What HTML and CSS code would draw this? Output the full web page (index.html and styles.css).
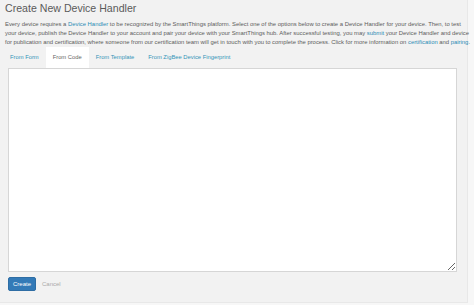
FILE: index.html
```html
<!DOCTYPE html>
<html lang="en">
  <head>
    <meta charset="UTF-8" />
    <title>Create New Device Handler</title>
    <link rel="stylesheet" href="styles.css">
  </head>
  <body>
    <div class="page">
      <h1>Create New Device Handler</h1>
      <p class="intro">
        Every device requires a <a href="#">Device Handler</a> to be recognized by the SmartThings platform. Select one of the options below to create a Device Handler for your device. Then, to test<br>
        your device, publish the Device Handler to your account and pair your device with your SmartThings hub. After successful testing, you may <a href="#">submit</a> your Device Handler and device<br>
        for publication and certification, where someone from our certification team will get in touch with you to complete the process. Click for more information on <a href="#">certification</a> and <a href="#">pairing</a>.
      </p>

      <ul class="tabs">
        <li><a href="#">From Form</a></li>
        <li class="active"><a href="#">From Code</a></li>
        <li><a href="#">From Template</a></li>
        <li><a href="#">From ZigBee Device Fingerprint</a></li>
      </ul>

      <div class="tab-body">
        <textarea class="code"></textarea>
      </div>

      <div class="actions">
        <button class="btn-create">Create</button>
        <a href="#" class="cancel">Cancel</a>
      </div>
    </div>
  </body>
</html>
```

FILE: styles.css
```css
* {
  margin: 0;
  padding: 0;
  box-sizing: border-box;
}

body {
  font-family: "Liberation Sans", Arial, sans-serif;
  background: #f7f7f7;
  color: #555;
  width: 474px;
  height: 305px;
  overflow: hidden;
}

.page {
  width: 468px;
  height: 303px;
  background: #f2f2f2;
  border-right: 1px solid #e8e8e8;
  border-bottom: 1px solid #e8e8e8;
  padding: 1px 0 0 5px;
}

h1 {
  font-size: 10.6px;
  font-weight: normal;
  color: #5a5a5a;
  line-height: 14px;
  margin-bottom: 5px;
}

.intro {
  font-size: 5.88px;
  line-height: 9px;
  color: #5c5c5c;
  white-space: nowrap;
}

a {
  color: #2a8bb5;
  text-decoration: none;
}

.tabs {
  list-style: none;
  display: flex;
  margin: 0 0 0 -2px;
  height: 21px;
}

.tabs li a {
  display: block;
  font-size: 5.8px;
  line-height: 21px;
  padding: 0 7px;
  color: #3394b8;
}

.tabs li.active a {
  background: #fff;
  color: #666;
}

.tab-body {
  padding-left: 3px;
}

.code {
  display: block;
  width: 449px;
  height: 204px;
  background: #fff;
  border: 1px solid #d6d6d6;
  resize: vertical;
}

.actions {
  display: flex;
  align-items: center;
  gap: 6px;
  margin-top: 5px;
  padding-left: 3px;
}

.btn-create {
  font-family: inherit;
  font-size: 6px;
  color: #fff;
  background: #337ab7;
  border: 1px solid #2e6da4;
  border-radius: 2px;
  width: 28px;
  height: 14px;
}

.cancel {
  font-size: 6px;
  color: #aaa;
}
```
